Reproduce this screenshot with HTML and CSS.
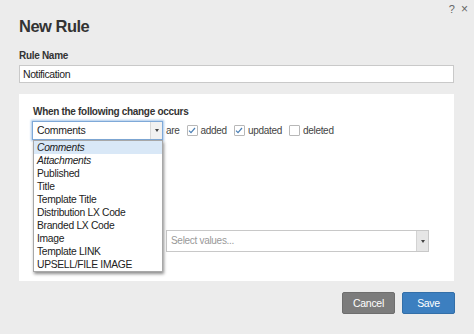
FILE: index.html
```html
<!DOCTYPE html>
<html>
<head>
<meta charset="utf-8">
<link rel="stylesheet" href="styles.css">
</head>
<body>
<div class="dialog">
  <div class="topbar"><span class="help">?</span><span class="close">×</span></div>
  <h1 class="title">New Rule</h1>
  <div class="field-label">Rule Name</div>
  <div class="text-input">Notification</div>
  <div class="panel">
    <div class="panel-label">When the following change occurs</div>
    <div class="change-row">
      <div class="select-wrap">
        <div class="select"><span class="select-text">Comments</span><span class="arrow"><span class="caret"></span></span></div>
        <ul class="dropdown">
          <li class="opt italic active">Comments</li>
          <li class="opt italic">Attachments</li>
          <li class="opt">Published</li>
          <li class="opt">Title</li>
          <li class="opt">Template Title</li>
          <li class="opt">Distribution LX Code</li>
          <li class="opt">Branded LX Code</li>
          <li class="opt">Image</li>
          <li class="opt">Template LINK</li>
          <li class="opt">UPSELL/FILE IMAGE</li>
        </ul>
      </div>
      <span class="word">are</span>
      <span class="check"><span class="box"><svg width="8" height="7" viewBox="0 0 8 7"><path d="M1 3.6 L3 5.6 L7 1" fill="none" stroke="#4a7fb5" stroke-width="1.2"/></svg></span>added</span>
      <span class="check"><span class="box"><svg width="8" height="7" viewBox="0 0 8 7"><path d="M1 3.6 L3 5.6 L7 1" fill="none" stroke="#4a7fb5" stroke-width="1.2"/></svg></span>updated</span>
      <span class="check"><span class="box"></span>deleted</span>
    </div>
    <div class="values-row">
      <div class="multi-select"><span class="placeholder">Select values...</span><span class="arrow2"><span class="caret"></span></span></div>
    </div>
  </div>
  <div class="footer">
    <button class="btn cancel">Cancel</button>
    <button class="btn save">Save</button>
  </div>
</div>
</body>
</html>
```

FILE: styles.css
```css
html, body {
  margin: 0;
  padding: 0;
  background: #ececec;
  font-family: "Liberation Sans", Arial, sans-serif;
  color: #333;
  letter-spacing: -0.3px;
}
.dialog {
  width: 474px;
  height: 334px;
  box-sizing: border-box;
  padding: 0 20px 0 19px;
}
.topbar {
  display: flex;
  justify-content: flex-end;
  gap: 6px;
  height: 12px;
  padding-top: 4px;
  margin-right: -14px;
  font-size: 11px;
  line-height: 11px;
  letter-spacing: 0;
  color: #666;
}
.close { font-size: 12px; }
.title {
  margin: 0;
  padding-top: 1px;
  height: 19px;
  font-size: 16.5px;
  font-weight: bold;
  line-height: 19px;
  letter-spacing: -0.5px;
  color: #333;
}
.field-label {
  margin-top: 13px;
  font-size: 10px;
  font-weight: bold;
  line-height: 13px;
}
.text-input {
  margin-top: 3px;
  height: 18px;
  box-sizing: border-box;
  background: #fff;
  border: 1px solid #c9c9c9;
  font-size: 10.5px;
  line-height: 16px;
  padding-left: 3px;
  letter-spacing: -0.4px;
  color: #222;
}
.panel {
  margin-top: 11px;
  background: #fff;
  height: 187px;
  box-sizing: border-box;
  padding: 11px 13px 0 13px;
}
.panel-label {
  font-size: 10px;
  font-weight: bold;
  line-height: 13px;
  padding-left: 1px;
}
.change-row {
  display: flex;
  align-items: center;
  margin-top: 3px;
  font-size: 10px;
  color: #444;
}
.select-wrap {
  position: relative;
  width: 131px;
}
.select {
  display: flex;
  height: 19px;
  box-sizing: border-box;
  border: 1px solid #7fa9d8;
  box-shadow: 0 0 2px 1px #a9c8ea;
  background: #fff;
}
.select-text {
  flex: 1;
  padding-left: 4px;
  line-height: 17px;
  font-size: 10.5px;
  color: #222;
}
.arrow {
  width: 11px;
  border-left: 1px solid #d8d8d8;
  background: #f1f1f1;
  display: flex;
  align-items: center;
  justify-content: center;
}
.caret {
  width: 0;
  height: 0;
  border-left: 2.5px solid transparent;
  border-right: 2.5px solid transparent;
  border-top: 3px solid #444;
}
.dropdown {
  position: absolute;
  left: 1px;
  top: 19px;
  width: 130px;
  margin: 0;
  padding: 0;
  list-style: none;
  background: #fff;
  border: 1px solid #a8a8a8;
  box-sizing: border-box;
  box-shadow: 1px 2px 3px rgba(0,0,0,0.45);
  z-index: 5;
}
.opt {
  height: 13px;
  line-height: 13px;
  padding-left: 3px;
  font-size: 10.3px;
  color: #222;
}
.italic { font-style: italic; }
.active { background: #d9e8f7; }
.word { margin-left: 3px; }
.check {
  display: flex;
  align-items: center;
  margin-left: 7px;
}
.box {
  width: 9px;
  height: 9px;
  border: 1px solid #b8b8b8;
  border-radius: 1px;
  margin-right: 3px;
  display: flex;
  align-items: center;
  justify-content: center;
  background: #fff;
}
.values-row {
  margin-top: 90px;
  padding-left: 134px;
}
.multi-select {
  display: flex;
  width: 263px;
  height: 22px;
  box-sizing: border-box;
  border: 1px solid #c8c8c8;
  background: #fff;
}
.placeholder {
  flex: 1;
  padding-left: 4px;
  line-height: 20px;
  font-size: 10px;
  color: #999;
}
.arrow2 {
  width: 11px;
  background: #e6e6e6;
  border-left: 1px solid #d3d3d3;
  display: flex;
  align-items: center;
  justify-content: center;
}
.footer {
  display: flex;
  justify-content: flex-end;
  gap: 7px;
  margin-top: 11px;
  margin-right: -1px;
}
.btn {
  width: 53px;
  height: 22px;
  border: 0;
  border-radius: 2px;
  color: #fff;
  font-family: inherit;
  font-size: 10.5px;
  letter-spacing: -0.3px;
  padding: 0;
}
.cancel { background: #7c7c7c; border: 1px solid #6e6e6e; }
.save { background: #3c7fc0; border: 1px solid #336fa8; }
```
